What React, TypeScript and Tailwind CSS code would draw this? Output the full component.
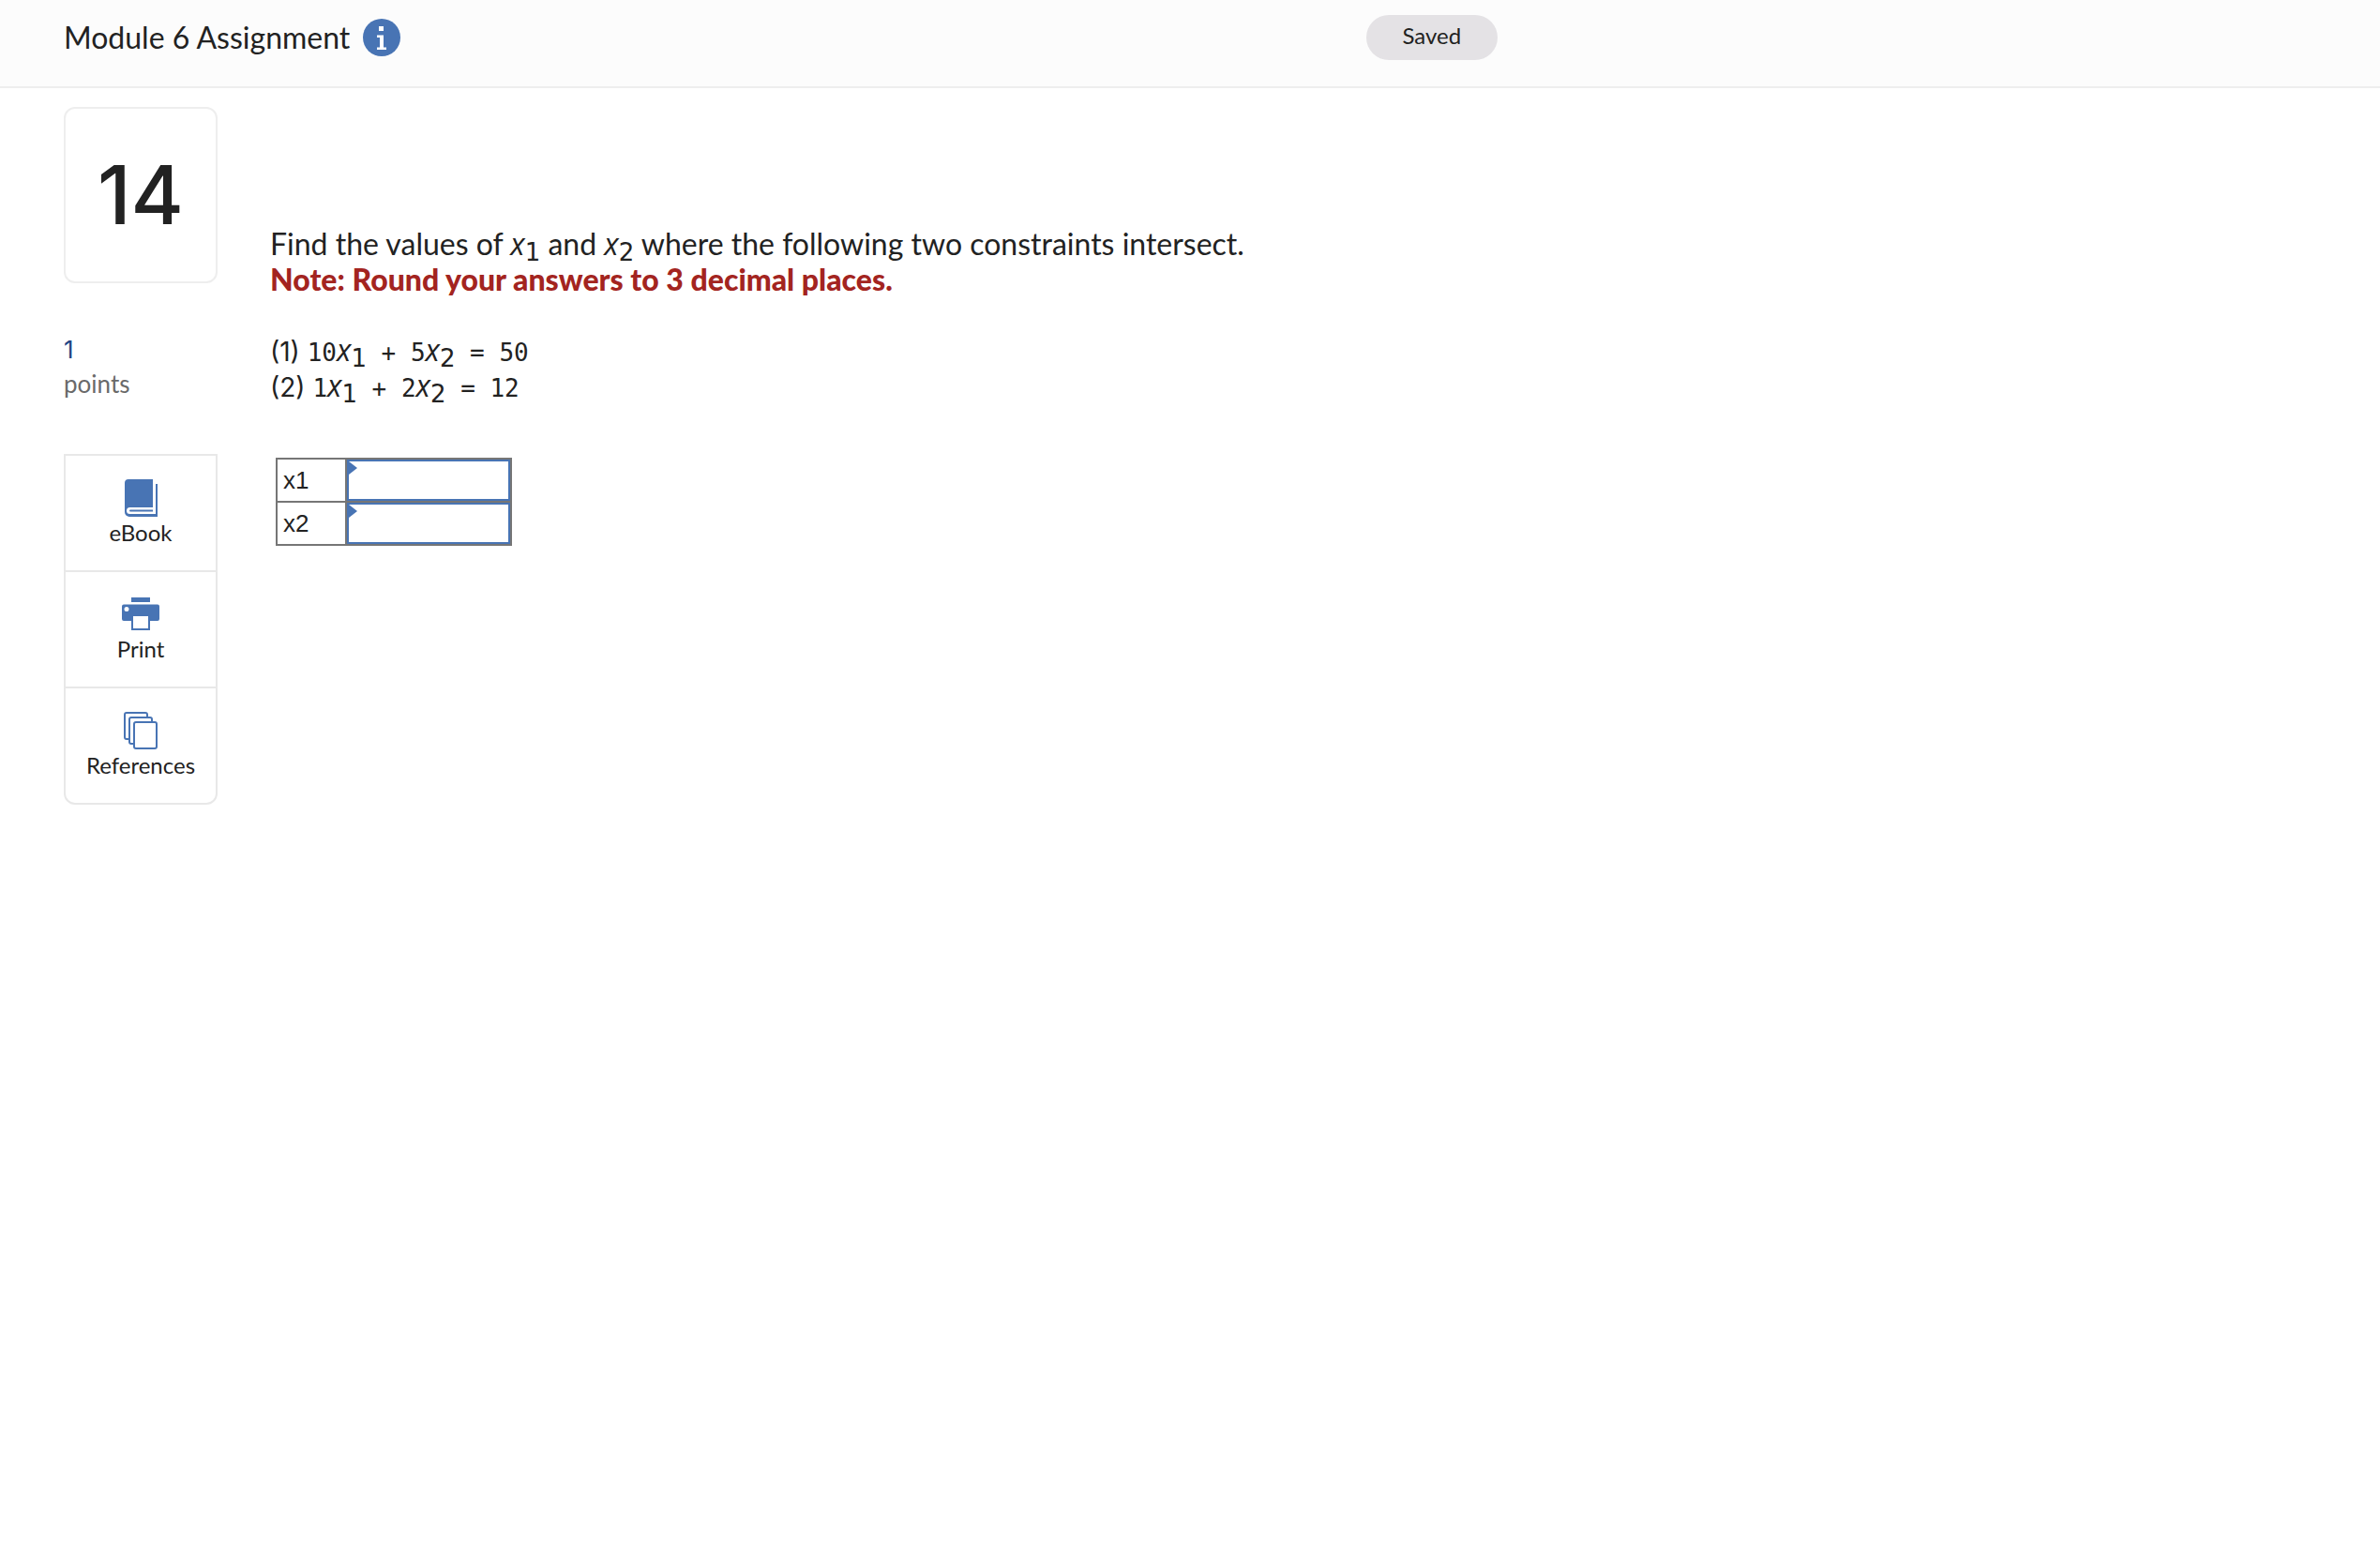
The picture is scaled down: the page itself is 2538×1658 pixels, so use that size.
import React from 'react';

interface ToolButtonProps {
    label: string;
    children: React.ReactNode;
}

const BookIcon = () => (
    <svg viewBox="0 0 36 42" className="w-[36px] h-[42px]" fill="#4874b4" aria-hidden="true">
        <path d="M5 1H31V31H6.500A3.500 3.500 0 0 0 6.500 38H34V6H36V41H6A5 5 0 0 1 1 36V5A4 4 0 0 1 5 1Z" />
        <path d="M7 33.500H31V35.500H7A1 1 0 0 1 7 33.500Z" />
    </svg>
);

const PrintIcon = () => (
    <svg viewBox="0 0 40 36" className="w-[40px] h-[36px]" fill="#4874b4" aria-hidden="true">
        <path d="M10 0H30V5H10Z" />
        <path
            fillRule="evenodd"
            d="M2 7.500H38A2 2 0 0 1 40 9.500V23A2 2 0 0 1 38 25H30V35H10V25H2A2 2 0 0 1 0 23V9.500A2 2 0 0 1 2 7.500ZM12 20V33H28V20ZM5 10A2.500 2.500 0 1 0 5 15A2.500 2.500 0 1 0 5 10Z"
        />
    </svg>
);

const PagesIcon = () => (
    <svg viewBox="0 0 36 42" className="w-[36px] h-[42px]" fill="#fff" stroke="#4874b4" strokeWidth="2" aria-hidden="true">
        <rect x="1" y="2" width="24" height="28" rx="2" />
        <rect x="6" y="7" width="24" height="28" rx="2" />
        <rect x="11" y="12" width="24" height="28" rx="2" />
    </svg>
);

const ToolButton: React.FC<ToolButtonProps> = ({ label, children }) => (
    <button
        type="button"
        className="flex h-[124px] flex-col items-center border-b-2 border-[#e8e8e8] pt-6 text-[24px] leading-7 last:h-[122px] last:border-b-0"
    >
        <span className="mb-0.5 flex h-[42px] items-center">{children}</span>
        {label}
    </button>
);

const Variable: React.FC<{ index: number }> = ({ index }) => (
    <>
        <i className="font-['Open_Sans',sans-serif] text-[32px] leading-none">x</i>
        <sub className="bottom-[-6px] font-['DejaVu_Sans',sans-serif] text-[26px]">{index}</sub>
    </>
);

const AnswerRow: React.FC<{ name: string }> = ({ name }) => (
    <tr className="h-[46px]">
        <th scope="row" className="w-[74px] border-2 border-[#767676] p-0 pl-1.5 text-left font-normal">
            <label htmlFor={name}>{name}</label>
        </th>
        <td className="relative w-[176px] border-2 border-[#767676] p-0">
            <input id={name} type="text" className="block h-[44px] w-full border-2 border-[#4874b4] px-3 outline-none" />
            <svg viewBox="0 0 9 14" className="absolute left-[2px] top-[2px] h-[14px] w-[9px]" fill="#4874b4" aria-hidden="true">
                <path d="M0 0L9 7L0 14Z" />
            </svg>
        </td>
    </tr>
);

export default function App() {
    return (
        <div className="min-h-screen bg-white font-['Lato',sans-serif] text-[#222]">
            <header className="flex h-[94px] items-start border-b-2 border-[#eee] bg-[#fcfcfc] pt-4">
                <div className="flex w-[57.4%] items-center gap-3.5 pl-[68px]">
                    <h1 className="text-[32px] leading-[48px]">Module 6 Assignment</h1>
                    <button type="button" aria-label="Assignment information">
                        <svg viewBox="0 0 40 40" className="h-10 w-10" aria-hidden="true">
                            <circle cx="20" cy="20" r="20" fill="#4874b4" />
                            <path d="M17 8H22V13H17ZM15 17.500H22V30.500H25V33H15V30.500H18V20H15Z" fill="#fff" />
                        </svg>
                    </button>
                </div>
                <div role="status" className="h-12 w-[140px] rounded-full bg-[#e4e2e5] text-center text-[24px] leading-[44px]">
                    Saved
                </div>
            </header>

            <div className="flex gap-14 pl-[68px] pt-5">
                <aside className="w-[164px] shrink-0">
                    <div className="flex h-[188px] items-center justify-center rounded-xl border-2 border-[#eee] font-['Inter',sans-serif] text-[86px] font-medium">
                        14
                    </div>
                    <div className="mt-[53px] text-[26px] leading-9">
                        <div className="font-['Inter',sans-serif] text-[#1f4585]">1</div>
                        <div className="text-[#6a6a6a]">points</div>
                    </div>
                    <div className="mt-[57px] flex flex-col rounded-b-xl border-2 border-[#e8e8e8]">
                        <ToolButton label="eBook"><BookIcon /></ToolButton>
                        <ToolButton label="Print"><PrintIcon /></ToolButton>
                        <ToolButton label="References"><PagesIcon /></ToolButton>
                    </div>
                </aside>

                <main className="pt-[127px] text-[32px] leading-[38px]">
                    <p className="h-[38px]">
                        Find the values of <Variable index={1} /> and <Variable index={2} /> where the following two constraints intersect.
                    </p>
                    <p className="h-[38px] font-black text-[#a32420]">Note: Round your answers to 3 decimal places.</p>

                    <div className="mt-10 whitespace-pre font-['DejaVu_Sans_Mono',monospace] text-[26px]">
                        <p className="h-[38px]">
                            <span className="font-['Inter',sans-serif] text-[28px] leading-none">(1) </span>
                            10<Variable index={1} /> + 5<Variable index={2} /> = 50
                        </p>
                        <p className="h-[38px]">
                            <span className="font-['Inter',sans-serif] text-[28px] leading-none">(2) </span>
                            1<Variable index={1} /> + 2<Variable index={2} /> = 12
                        </p>
                    </div>

                    <table className="ml-1.5 mt-[55px] border-collapse font-['Liberation_Sans',sans-serif] text-[26px] leading-8">
                        <tbody>
                            <AnswerRow name="x1" />
                            <AnswerRow name="x2" />
                        </tbody>
                    </table>
                </main>
            </div>
        </div>
    );
}
